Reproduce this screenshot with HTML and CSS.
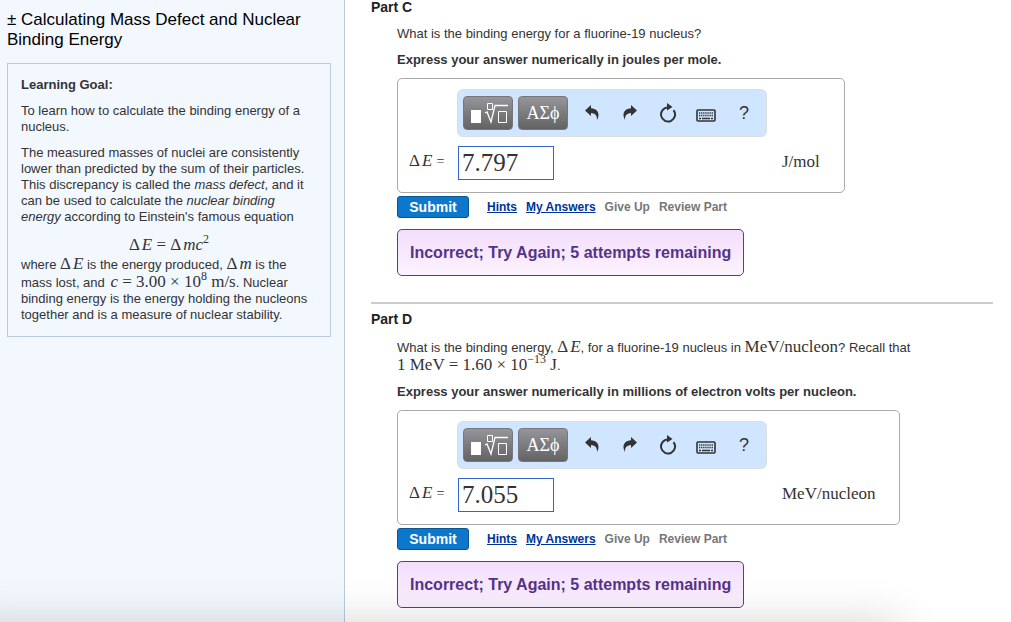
FILE: index.html
```
<!DOCTYPE html>
<html lang="en">
<head>
    <meta charset="UTF-8">
    <meta name="viewport" content="width=device-width, initial-scale=1.0">
    <title>Calculating Mass Defect and Nuclear Binding Energy</title>
    <link rel="stylesheet" href="styles.css">
</head>
<body>
    <!-- Shared toolbar icons -->
    <svg class="sprite" aria-hidden="true">
        <symbol id="icon-root" viewBox="0 0 40 22">
            <path d="M3 8h10v13H3z" fill="#fff"/>
            <path d="M19.500 1.500h5v6h-5zM30.500 9.500h8v11h-8z" fill="none" stroke="#fff"/>
            <path d="M17 11l2-1 4 10 4-16.500h13" fill="none" stroke="#fff" stroke-width="1.300"/>
        </symbol>
        <symbol id="icon-undo" viewBox="0 0 14 16">
            <path d="M0 5.500L6 0v3.300c5 .2 7.800 3.200 7.500 7.200-.1 1.600-.6 3-1.500 4.500.2-4-1.500-6.700-6-7V11z" fill="#333"/>
        </symbol>
        <symbol id="icon-redo" viewBox="0 0 14 16">
            <path d="M14 5.500L8 0v3.300C3 3.500.2 6.500.5 10.500c.1 1.600.6 3 1.500 4.500-.2-4 1.500-6.700 6-7V11z" fill="#333"/>
        </symbol>
        <symbol id="icon-reset" viewBox="0 0 18 20">
            <path d="M9 4.500a7 7 0 1 0 5.500 2.600" fill="none" stroke="#333" stroke-width="2"/>
            <path d="M8 0l5.500 4L8 7.500z" fill="#333"/>
        </symbol>
        <symbol id="icon-keyboard" viewBox="0 0 20 13">
            <rect x="1" y="1" width="18" height="11" rx="1" fill="none" stroke="#333" stroke-width="1.600"/>
            <path d="M3 4h14M3 6.500h14" stroke="#333" stroke-width="1.600" stroke-dasharray="1.300 .8"/>
            <path d="M3 9.500h2M6 9.500h8M15 9.500h2" stroke="#333" stroke-width="1.500"/>
        </symbol>
    </svg>

    <div class="page">
        <aside class="sidebar">
            <h1>± Calculating Mass Defect and Nuclear Binding Energy</h1>
            <div class="goal">
                <h2>Learning Goal:</h2>
                <p>To learn how to calculate the binding energy of a nucleus.</p>
                <p>The measured masses of nuclei are consistently lower than predicted by the sum of their particles. This discrepancy is called the <em>mass defect</em>, and it can be used to calculate the <em>nuclear binding energy</em> according to Einstein's famous equation</p>
                <div class="equation math">Δ<i>E</i> = Δ<i>mc</i><sup>2</sup></div>
                <p>where <span class="math">Δ<i>E</i></span> is the energy produced, <span class="math">Δ<i>m</i></span> is the mass lost, and <span class="math"><i>c</i> = 3.00 × 10<sup>8</sup> m/s</span>. Nuclear binding energy is the energy holding the nucleons together and is a measure of nuclear stability.</p>
            </div>
        </aside>

        <main class="content">
            <section class="part">
                <h2>Part C</h2>
                <div class="part-body">
                    <p>What is the binding energy for a fluorine-19 nucleus?</p>
                    <p class="instruction">Express your answer numerically in joules per mole.</p>
                    <form>
                        <div class="answer-box">
                            <div class="toolbar">
                                <button type="button" class="tool" aria-label="Templates"><svg class="root"><use href="#icon-root"/></svg></button>
                                <button type="button" class="tool" aria-label="Symbols">ΑΣϕ</button>
                                <button type="button" class="icon-btn" aria-label="Undo"><svg class="arrow"><use href="#icon-undo"/></svg></button>
                                <button type="button" class="icon-btn" aria-label="Redo"><svg class="arrow"><use href="#icon-redo"/></svg></button>
                                <button type="button" class="icon-btn" aria-label="Reset"><svg class="reset"><use href="#icon-reset"/></svg></button>
                                <button type="button" class="icon-btn" aria-label="Keyboard shortcuts"><svg class="keyboard"><use href="#icon-keyboard"/></svg></button>
                                <button type="button" class="icon-btn" aria-label="Help">?</button>
                            </div>
                            <label class="math" for="answer-c">Δ<i>E</i> <small>=</small></label>
                            <input type="text" id="answer-c" value="7.797">
                            <span class="unit math">J/mol</span>
                        </div>
                        <div class="actions">
                            <button type="submit" class="submit">Submit</button>
                            <a href="#">Hints</a>
                            <a href="#">My Answers</a>
                            <span>Give Up</span>
                            <span>Review Part</span>
                        </div>
                    </form>
                    <div class="feedback">Incorrect; Try Again; 5 attempts remaining</div>
                </div>
            </section>

            <section class="part">
                <h2>Part D</h2>
                <div class="part-body">
                    <p>What is the binding energy, <span class="math">Δ<i>E</i></span>, for a fluorine-19 nucleus in <span class="math">MeV/nucleon</span>? Recall that <br><span class="math">1 MeV = 1.60 × 10<sup>−13</sup> J</span>.</p>
                    <p class="instruction">Express your answer numerically in millions of electron volts per nucleon.</p>
                    <form>
                        <div class="answer-box">
                            <div class="toolbar">
                                <button type="button" class="tool" aria-label="Templates"><svg class="root"><use href="#icon-root"/></svg></button>
                                <button type="button" class="tool" aria-label="Symbols">ΑΣϕ</button>
                                <button type="button" class="icon-btn" aria-label="Undo"><svg class="arrow"><use href="#icon-undo"/></svg></button>
                                <button type="button" class="icon-btn" aria-label="Redo"><svg class="arrow"><use href="#icon-redo"/></svg></button>
                                <button type="button" class="icon-btn" aria-label="Reset"><svg class="reset"><use href="#icon-reset"/></svg></button>
                                <button type="button" class="icon-btn" aria-label="Keyboard shortcuts"><svg class="keyboard"><use href="#icon-keyboard"/></svg></button>
                                <button type="button" class="icon-btn" aria-label="Help">?</button>
                            </div>
                            <label class="math" for="answer-d">Δ<i>E</i> <small>=</small></label>
                            <input type="text" id="answer-d" value="7.055">
                            <span class="unit math">MeV/nucleon</span>
                        </div>
                        <div class="actions">
                            <button type="submit" class="submit">Submit</button>
                            <a href="#">Hints</a>
                            <a href="#">My Answers</a>
                            <span>Give Up</span>
                            <span>Review Part</span>
                        </div>
                    </form>
                    <div class="feedback">Incorrect; Try Again; 5 attempts remaining</div>
                </div>
            </section>
        </main>
    </div>
    <div class="bottom-shade"></div>
</body>
</html>
```
FILE: styles.css
```
* {
    box-sizing: border-box;
}

body {
    margin: 0;
    font-family: "Liberation Sans", Arial, sans-serif;
    font-size: 13px;
    line-height: 16px;
    color: #333;
    background-color: #fff;
}

h1, h2, p {
    margin: 0;
}

.sprite {
    display: none;
}

.page {
    display: grid;
    grid-template-columns: 345px 1fr;
    min-height: 100vh;
}

/* Sidebar */
.sidebar {
    padding: 10px 13px 10px 7px;
    background-color: #f3f8ff;
    border-right: 1px solid #b9cbdc;
}

h1 {
    font-size: 17px;
    font-weight: normal;
    line-height: 20px;
    color: #000;
    margin-bottom: 13px;
}

.goal {
    border: 1px solid #b9cbdc;
    padding: 13px;
}

.goal h2 {
    font-size: 13px;
    margin-bottom: 10px;
}

.goal p {
    margin-bottom: 10px;
}

.goal p:last-child {
    margin-bottom: 0;
}

.math {
    font-family: "Liberation Serif", "Times New Roman", serif;
    font-size: 17px;
    line-height: 18px;
}

.math i {
    margin-left: 2px;
}

.math sup {
    font-size: 12px;
    line-height: 0;
}

.equation {
    text-align: center;
    line-height: 20px;
}

/* Parts */
.content {
    padding: 0 18px 14px 26px;
}

.part + .part {
    margin-top: 26px;
    padding-top: 8px;
    border-top: 2px solid #ccc;
}

.part h2 {
    font-size: 14px;
    line-height: 14px;
    color: #222;
    margin-bottom: 12px;
}

.part-body {
    padding-left: 26px;
}

.part-body p {
    margin-bottom: 10px;
}

.instruction {
    font-weight: bold;
}

.answer-box {
    display: inline-grid;
    grid-template-columns: 48px 310px auto;
    row-gap: 9px;
    align-items: center;
    vertical-align: top;
    padding: 10px 24px 12px 11px;
    border: 1px solid #aaa;
    border-radius: 5px;
}

.toolbar {
    grid-column: 2;
    display: flex;
    align-items: center;
    height: 48px;
    padding-left: 5px;
    background-color: #d0e5ff;
    border: 1px solid #ddd;
    border-radius: 6px;
}

.tool {
    display: flex;
    justify-content: center;
    align-items: center;
    width: 50px;
    height: 34px;
    margin-right: 5px;
    padding: 0;
    font-family: "Liberation Serif", "Times New Roman", serif;
    font-size: 18px;
    color: #fff;
    background: linear-gradient(#95959b, #636363);
    border: 1px solid #77777b;
    border-radius: 4px;
    cursor: pointer;
}

.icon-btn {
    display: flex;
    justify-content: center;
    align-items: center;
    width: 38px;
    height: 34px;
    padding: 0;
    font-family: "Liberation Sans", Arial, sans-serif;
    font-size: 18px;
    color: #333;
    background: none;
    border: none;
    cursor: pointer;
}

.root {
    width: 40px;
    height: 22px;
}

.arrow {
    width: 14px;
    height: 16px;
}

.reset {
    width: 18px;
    height: 20px;
}

.keyboard {
    width: 20px;
    height: 13px;
    margin-top: 4px;
}

.answer-box label,
.unit {
    padding-bottom: 3px;
}

.answer-box label {
    grid-column: 1;
}

.answer-box small {
    font-size: 14px;
}

.answer-box input {
    width: 96px;
    height: 34px;
    margin-left: 1px;
    padding: 0 3px;
    font-family: "Liberation Serif", "Times New Roman", serif;
    font-size: 25px;
    color: #333;
    background-color: #fff;
    border: 1px solid #36c;
}

.unit {
    padding-left: 15px;
}

.actions {
    display: flex;
    align-items: center;
    gap: 9px;
    margin-top: 3px;
    font-size: 12px;
    font-weight: bold;
    color: #777;
}

.actions a {
    color: #039;
}

.submit {
    width: 72px;
    height: 22px;
    margin-right: 9px;
    padding: 0;
    font-family: "Liberation Sans", Arial, sans-serif;
    font-size: 14px;
    font-weight: bold;
    color: #fff;
    background-color: #0d77cc;
    border: 1px solid #0b568f;
    border-radius: 3px;
    cursor: pointer;
}

.feedback {
    width: fit-content;
    margin-top: 11px;
    padding: 15px 12px 14px;
    font-size: 16px;
    font-weight: bold;
    color: #538;
    background: linear-gradient(#f2defd, #fdf2ff);
    border: 1px solid #639;
    border-radius: 5px;
}

/* Soft shade along the bottom edge of the window */
.bottom-shade {
    position: fixed;
    top: 100%;
    left: -40px;
    right: 110px;
    height: 60px;
    box-shadow: 0 0 46px rgba(0, 0, 0, 0.16);
    pointer-events: none;
}
```
